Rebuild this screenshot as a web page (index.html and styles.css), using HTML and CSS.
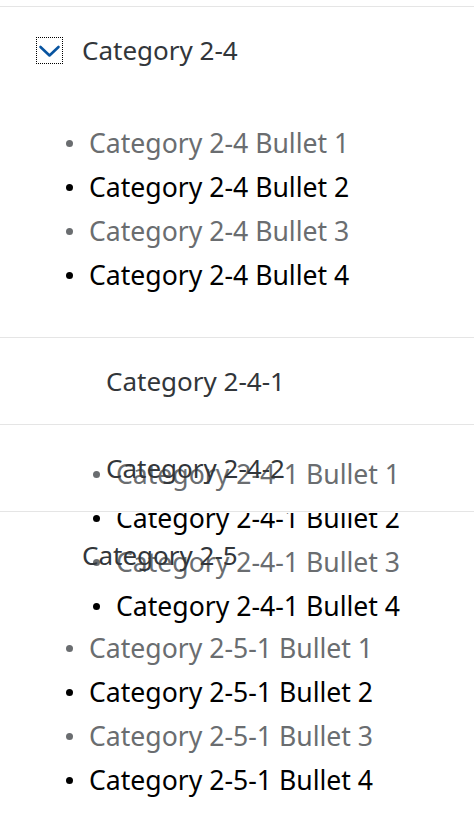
FILE: index.html
```html
<!DOCTYPE html>
<html lang="en">
<head>
<meta charset="utf-8">
<title>Tree</title>
<link rel="stylesheet" href="styles.css">
</head>
<body>
<div class="tree">
  <div class="node">
    <div class="row lvl1">
      <span class="toggle">
        <svg width="25" height="25" viewBox="0 0 25 25" aria-hidden="true">
          <polyline points="3.5,9 12.5,17.5 21.5,9" fill="none" stroke="#0854a0" stroke-width="2.6" stroke-linecap="round" stroke-linejoin="round"/>
        </svg>
      </span>
      <span class="label">Category 2-4</span>
    </div>
    <ul class="bullets lvl1">
      <li class="muted">Category 2-4 Bullet 1</li>
      <li>Category 2-4 Bullet 2</li>
      <li class="muted">Category 2-4 Bullet 3</li>
      <li>Category 2-4 Bullet 4</li>
    </ul>
  </div>
  <div class="node fixed">
    <div class="row lvl2"><span class="label">Category 2-4-1</span></div>
    <ul class="bullets lvl2">
      <li class="muted">Category 2-4-1 Bullet 1</li>
      <li>Category 2-4-1 Bullet 2</li>
      <li class="muted">Category 2-4-1 Bullet 3</li>
      <li>Category 2-4-1 Bullet 4</li>
    </ul>
  </div>
  <div class="node fixed">
    <div class="row lvl2"><span class="label">Category 2-4-2</span></div>
  </div>
  <div class="node">
    <div class="row lvl1 noicon"><span class="label">Category 2-5</span></div>
    <ul class="bullets lvl1">
      <li class="muted">Category 2-5-1 Bullet 1</li>
      <li>Category 2-5-1 Bullet 2</li>
      <li class="muted">Category 2-5-1 Bullet 3</li>
      <li>Category 2-5-1 Bullet 4</li>
    </ul>
  </div>
</div>
</body>
</html>
```
FILE: styles.css
```css
html, body {
  margin: 0;
  padding: 0;
  background: #ffffff;
  overflow: hidden;
}

body {
  font-family: "Noto Sans", "Open Sans", sans-serif;
  font-size: 26px;
  color: #32363a;
}

.tree {
  padding-top: 6px;
}

.node {
  position: relative;
  border-top: 1px solid #e5e5e5;
  box-shadow: 0 -5px 0 #ffffff, inset 0 1px 0 #ffffff;
}

.node.fixed {
  height: 86px;
}

.row {
  display: flex;
  align-items: center;
  height: 86px;
  white-space: nowrap;
}

.row.lvl1 {
  padding-left: 36px;
}

.row.lvl1.noicon {
  padding-left: 82px;
}

.row.lvl2 {
  padding-left: 106px;
}

.toggle {
  display: flex;
  align-items: center;
  justify-content: center;
  width: 25px;
  height: 25px;
  border: 1px dotted #000000;
  margin-right: 19px;
  margin-top: 1px;
}

.label {
  color: #32363a;
}

.bullets {
  list-style: none;
  margin: 0;
  padding: 28px 0 40px;
}

.bullets li {
  display: flex;
  align-items: center;
  height: 44px;
  white-space: nowrap;
  color: #000000;
  font-size: 26.6px;
}

.bullets li::before {
  content: "";
  width: 7px;
  height: 7px;
  border-radius: 50%;
  background: currentColor;
  margin-right: 16px;
  flex: none;
}

.bullets.lvl1 li {
  padding-left: 66px;
}

.bullets.lvl2 li {
  padding-left: 93px;
}

.bullets li.muted {
  color: #6a6d70;
}
```
